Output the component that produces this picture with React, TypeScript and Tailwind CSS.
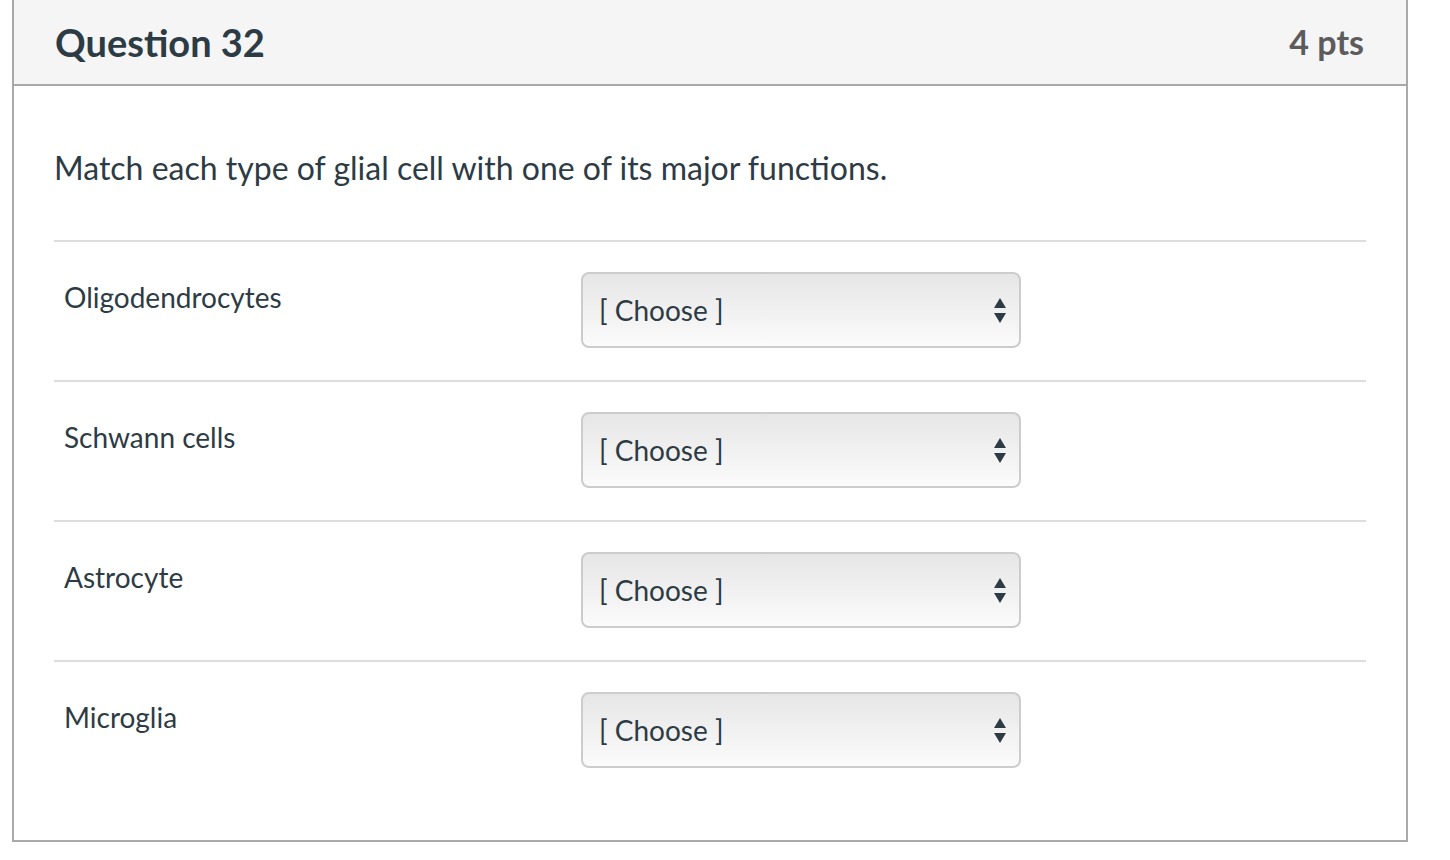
import React from "react";

const items = ["Oligodendrocytes", "Schwann cells", "Astrocyte", "Microglia"];

function Arrows() {
  return (
    <svg width="12" height="25" viewBox="0 0 12 25" className="block">
      <polygon points="6,0 12,10 0,10" fill="#2d3b45" />
      <polygon points="0,15 12,15 6,25" fill="#2d3b45" />
    </svg>
  );
}

export default function App() {
  return (
    <div
      className="w-[1450px] h-[860px] bg-white"
      style={{ fontFamily: "Lato, 'Noto Sans', sans-serif" }}
    >
      <div className="ml-[12px] w-[1396px] h-[842px] border-l-2 border-r-2 border-b-2 border-[#a9a9a9] flex flex-col">
        <div className="h-[86px] shrink-0 bg-[#f5f5f5] border-b-2 border-[#a9a9a9] flex items-center justify-between px-[40px]">
          <div className="text-[38px] font-bold text-[#2d3b45] leading-none pl-[1px]">Question 32</div>
          <div className="text-[34px] font-bold text-[#5c5c5c] leading-none pr-[2px]">4 pts</div>
        </div>
        <div className="px-[40px]">
          <div className="h-[154px] pt-[64px] text-[32px] text-[#2d3b45] leading-[36px]">
            Match each type of glial cell with one of its major functions.
          </div>
          {items.map((it) => (
            <div key={it} className="h-[140px] border-t-2 border-[#dddddd] flex items-start">
              <div className="w-[527px] pl-[10px] pt-[38px] text-[28px] text-[#2d3b45] leading-[34px]">{it}</div>
              <div className="mt-[30px] w-[440px] h-[76px] rounded-[8px] border-2 border-[#cccccc] bg-gradient-to-b from-[#e6e6e6] to-[#fbfbfb] flex items-center justify-between pl-[16px] pr-[13px]">
                <span className="text-[28px] text-[#2d3b45] leading-none">[ Choose ]</span>
                <Arrows />
              </div>
            </div>
          ))}
        </div>
      </div>
    </div>
  );
}
